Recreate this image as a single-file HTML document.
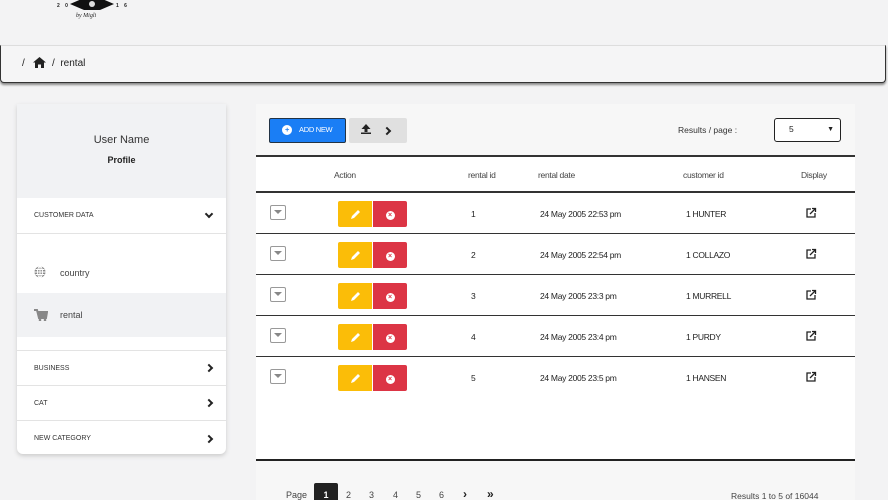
<!DOCTYPE html>
<html><head><meta charset="utf-8"><style>
*{box-sizing:border-box;margin:0;padding:0}
html,body{width:888px;height:500px;overflow:hidden}
body{background:#f3f3f4;font-family:"Liberation Sans",sans-serif;font-size:9px;color:#222;position:relative}
.abs{position:absolute}
.bc{left:0;top:45px;width:886px;height:38px;border:1px solid #333;border-top:1px solid #ddd;border-radius:0 0 4px 4px;box-shadow:0 2px 2px #888;background:#f5f5f6}
.side{left:17px;top:104px;width:209px;height:350px;background:#fff;box-shadow:0 2px 4px #ccc;border-radius:0 0 6px 6px}
.sh{height:94px;background:#f1f2f4;text-align:center}
.it{height:35px;border-bottom:1px solid #e3e3e3;display:flex;align-items:center;padding:0 14px 0 17px;justify-content:space-between;font-size:7px;color:#333}
.main{left:256px;top:104px;width:599px;height:396px;background:#fff}
.row{position:absolute;left:0;width:599px;height:41px;border-bottom:1px solid #333}
.chk{position:absolute;left:14px;top:12px;width:16px;height:15px;border:1.5px solid #999;border-radius:2px}
.chk:after{content:"";position:absolute;left:3px;top:3.5px;border:4px solid transparent;border-top:4.5px solid #888}
.y{position:absolute;left:82px;top:8px;width:34px;height:26px;background:#fbbd08;border-radius:2px 0 0 2px}
.r{position:absolute;left:117px;top:8px;width:34px;height:26px;background:#dc3545;border-radius:0 2px 2px 0;text-align:center;padding-top:8px}
.r i{display:inline-block;width:9px;height:9px;border-radius:50%;background:#fff;color:#dc3545;font-size:7px;line-height:9px;font-style:normal;font-weight:bold}
.t{position:absolute;top:16px;font-size:8.5px;letter-spacing:-0.3px}
.chev{display:inline-block;width:6px;height:6px;border-right:2px solid #222;border-bottom:2px solid #222}
</style></head><body>
<div class="abs" style="left:57px;top:3px;font-size:5px;font-weight:bold;letter-spacing:2px">2 0</div>
<svg class="abs" style="left:70px;top:0" width="44" height="10"><polygon points="0,4 14,-2 30,-2 44,4 30,10 14,10" fill="#111"/><circle cx="22" cy="4" r="3" fill="#ddd"/></svg>
<div class="abs" style="left:116px;top:3px;font-size:5px;font-weight:bold;letter-spacing:2px">1 6</div>
<div class="abs" style="left:76px;top:13px;font-size:6px;font-style:italic;font-family:'Liberation Serif',serif">by Migli</div>
<div class="abs bc"></div>
<div class="abs" style="left:22px;top:58px;font-size:10px">/</div>
<svg class="abs" style="left:33px;top:57px" width="13" height="11"><path d="M6.5 0 L0 5.5 H2 V11 H5 V7.5 H8 V11 H11 V5.5 H13 Z" fill="#222"/></svg>
<div class="abs" style="left:52px;top:58px;font-size:10px">/ &nbsp;rental</div>

<div class="abs side">
<div class="sh"><div style="padding-top:30px;font-size:11px;color:#333">User Name</div><div style="margin-top:9px;font-weight:bold;font-size:9px">Profile</div></div>
<div class="it" style="height:36px"><span>CUSTOMER DATA</span><span class="chev" style="transform:rotate(45deg);margin-top:-3px"></span></div>
<div style="height:59px;display:flex;align-items:flex-end;padding:0 0 15px 17px;font-size:9px;color:#444"><svg width="12" height="12" style="margin-right:14px"><circle cx="6" cy="6" r="5.5" fill="#888"/><path d="M0.5 6H11.5M6 0.5V11.5M1.5 3.5H10.5M1.5 8.5H10.5" stroke="#fff" stroke-width="1"/><ellipse cx="6" cy="6" rx="2.5" ry="5.5" fill="none" stroke="#fff"/></svg>country</div>
<div style="height:44px;background:#f1f2f4;display:flex;align-items:center;padding-left:17px;font-size:9px;color:#444"><svg width="14" height="12" style="margin-right:12px"><path d="M0 1H3L5 9H12L13 3H4" stroke="#888" stroke-width="2" fill="#888"/><circle cx="6" cy="11" r="1.3" fill="#888"/><circle cx="11" cy="11" r="1.3" fill="#888"/></svg>rental</div>
<div style="height:14px;border-bottom:1px solid #e3e3e3"></div>
<div class="it"><span>BUSINESS</span><span class="chev" style="transform:rotate(-45deg)"></span></div>
<div class="it"><span>CAT</span><span class="chev" style="transform:rotate(-45deg)"></span></div>
<div class="it" style="border:none"><span>NEW CATEGORY</span><span class="chev" style="transform:rotate(-45deg)"></span></div>
</div>

<div class="abs main">
<div class="abs" style="left:0;top:0;width:599px;height:53px;background:#f7f7f7;border-bottom:2px solid #333"></div>
<div class="abs" style="left:13px;top:14px;width:77px;height:25px;background:#1a7ef5;border:1.5px solid #234;border-radius:2px;color:#fff;font-size:7.5px;line-height:22px;padding-left:12px;letter-spacing:-0.3px"><span style="display:inline-block;width:10px;height:10px;border-radius:50%;background:#fff;color:#1a7ef5;text-align:center;line-height:10px;font-weight:bold;margin-right:7px">+</span>ADD NEW</div>
<div class="abs" style="left:93px;top:14px;width:58px;height:25px;background:#e0e0e0;border-radius:2px"></div>
<svg class="abs" style="left:105px;top:20px" width="10" height="10"><path d="M5 0 L9.5 5 H6.5 V8 H3.5 V5 H0.5 Z M0 8.5 H10 V10 H0 Z" fill="#222"/></svg>
<span class="chev abs" style="left:128px;top:24px;transform:rotate(-45deg)"></span>
<div class="abs" style="left:422px;top:21px;font-size:8.5px;color:#333">Results / page :</div>
<div class="abs" style="left:518px;top:14px;width:67px;height:24px;border:1.5px solid #222;border-radius:3px;background:#fff;font-size:8.5px;line-height:21px;padding-left:14px">5<span style="position:absolute;right:6px;font-size:7px">&#9660;</span></div>
<div class="row" style="top:53px;height:36px;border-bottom:2px solid #333;color:#444;font-size:8px">
<span class="t" style="left:78px;top:13px">Action</span><span class="t" style="left:212px;top:13px">rental id</span><span class="t" style="left:282px;top:13px">rental date</span><span class="t" style="left:427px;top:13px">customer id</span><span class="t" style="left:545px;top:13px">Display</span></div>

<div class="row" style="top:89px"><div class="chk"></div><div class="y"></div><div class="r"><i>×</i></div><span class="t" style="left:215px">1</span><span class="t" style="left:284px">24 May 2005 22:53 pm</span><span class="t" style="left:430px">1 HUNTER</span></div>
<div class="row" style="top:130px"><div class="chk"></div><div class="y"></div><div class="r"><i>×</i></div><span class="t" style="left:215px">2</span><span class="t" style="left:284px">24 May 2005 22:54 pm</span><span class="t" style="left:430px">1 COLLAZO</span></div>
<div class="row" style="top:171px"><div class="chk"></div><div class="y"></div><div class="r"><i>×</i></div><span class="t" style="left:215px">3</span><span class="t" style="left:284px">24 May 2005 23:3 pm</span><span class="t" style="left:430px">1 MURRELL</span></div>
<div class="row" style="top:212px"><div class="chk"></div><div class="y"></div><div class="r"><i>×</i></div><span class="t" style="left:215px">4</span><span class="t" style="left:284px">24 May 2005 23:4 pm</span><span class="t" style="left:430px">1 PURDY</span></div>
<div class="row" style="top:253px;border-bottom:none"><div class="chk"></div><div class="y"></div><div class="r"><i>×</i></div><span class="t" style="left:215px">5</span><span class="t" style="left:284px">24 May 2005 23:5 pm</span><span class="t" style="left:430px">1 HANSEN</span></div>

<svg class="abs" style="left:0;top:0" width="599" height="300">
<g id="p"><path d="M96 112 L102 106 L104 108 L98 114 Z M95 115 L96 112 L98 114 Z" fill="#fff"/><path d="M555 105 H551 V113 H559 V109 M554 110 L559 105 M556 104.5 H559.5 V108" stroke="#222" stroke-width="1.3" fill="none"/></g>
<use href="#p" y="41"/><use href="#p" y="82"/><use href="#p" y="123"/><use href="#p" y="164"/>
</svg>

<div class="abs" style="left:0;top:355px;width:599px;height:41px;background:#f7f7f7;border-top:2px solid #222"></div>
<div class="abs" style="left:58px;top:379px;width:24px;height:21px;background:#222;border-radius:2px 2px 0 0;color:#fff;font-weight:bold;text-align:center;padding-top:7px;font-size:9px">1</div>
<div class="abs" style="left:30px;top:386px;font-size:9px;color:#444">Page</div>
<div class="abs" style="left:90px;top:386px;font-size:9px;color:#444">2</div>
<div class="abs" style="left:113px;top:386px;font-size:9px;color:#444">3</div>
<div class="abs" style="left:137px;top:386px;font-size:9px;color:#444">4</div>
<div class="abs" style="left:160px;top:386px;font-size:9px;color:#444">5</div>
<div class="abs" style="left:183px;top:386px;font-size:9px;color:#444">6</div>
<div class="abs" style="left:207px;top:383px;font-size:12px;font-weight:bold">&#8250;</div>
<div class="abs" style="left:231px;top:383px;font-size:12px;font-weight:bold">&#187;</div>
<div class="abs" style="left:475px;top:387px;font-size:8.5px;color:#444">Results 1 to 5 of 16044</div>
</div>
</body></html>
